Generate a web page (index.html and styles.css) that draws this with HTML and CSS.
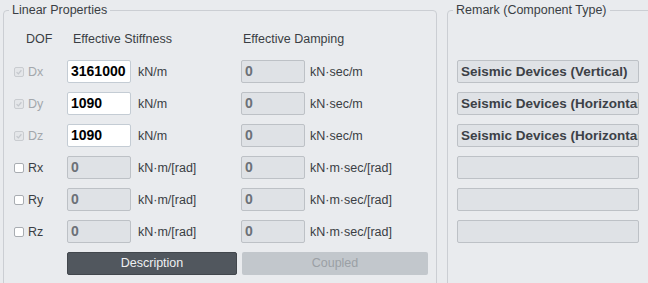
FILE: index.html
```html
<!DOCTYPE html>
<html>
<head>
    <meta charset="utf-8">
    <title>Linear Properties</title>
    <link rel="stylesheet" href="styles.css">
</head>
<body>
<div class="page">
    <fieldset class="group linear">
        <legend>Linear Properties</legend>
        <div class="row head">
            <div class="dof">DOF</div>
            <div class="col_stiff">Effective Stiffness</div>
            <div class="col_damp">Effective Damping</div>
        </div>

        <div class="row">
            <div class="dof off"><span class="chk checked"><svg viewBox="0 0 10 10"><path d="M2 5.2 L4.2 7.3 L8 2.8" fill="none" stroke="#c4c8cd" stroke-width="1.6"/></svg></span>Dx</div>
            <div class="field edit">3161000</div>
            <div class="unit">kN/m</div>
            <div class="field">0</div>
            <div class="unit2">kN·sec/m</div>
        </div>
        <div class="row">
            <div class="dof off"><span class="chk checked"><svg viewBox="0 0 10 10"><path d="M2 5.2 L4.2 7.3 L8 2.8" fill="none" stroke="#c4c8cd" stroke-width="1.6"/></svg></span>Dy</div>
            <div class="field edit">1090</div>
            <div class="unit">kN/m</div>
            <div class="field">0</div>
            <div class="unit2">kN·sec/m</div>
        </div>
        <div class="row">
            <div class="dof off"><span class="chk checked"><svg viewBox="0 0 10 10"><path d="M2 5.2 L4.2 7.3 L8 2.8" fill="none" stroke="#c4c8cd" stroke-width="1.6"/></svg></span>Dz</div>
            <div class="field edit">1090</div>
            <div class="unit">kN/m</div>
            <div class="field">0</div>
            <div class="unit2">kN·sec/m</div>
        </div>
        <div class="row">
            <div class="dof"><span class="chk"></span>Rx</div>
            <div class="field">0</div>
            <div class="unit">kN·m/[rad]</div>
            <div class="field">0</div>
            <div class="unit2">kN·m·sec/[rad]</div>
        </div>
        <div class="row">
            <div class="dof"><span class="chk"></span>Ry</div>
            <div class="field">0</div>
            <div class="unit">kN·m/[rad]</div>
            <div class="field">0</div>
            <div class="unit2">kN·m·sec/[rad]</div>
        </div>
        <div class="row">
            <div class="dof"><span class="chk"></span>Rz</div>
            <div class="field">0</div>
            <div class="unit">kN·m/[rad]</div>
            <div class="field">0</div>
            <div class="unit2">kN·m·sec/[rad]</div>
        </div>

        <div class="buttons">
            <div class="btn dark">Description</div>
            <div class="btn light">Coupled</div>
        </div>
    </fieldset>

    <fieldset class="group remark">
        <legend>Remark (Component Type)</legend>
        <div class="spacer"></div>
        <div class="remark_field">Seismic Devices (Vertical)</div>
        <div class="remark_field">Seismic Devices (Horizontal)</div>
        <div class="remark_field">Seismic Devices (Horizontal)</div>
        <div class="remark_field"></div>
        <div class="remark_field"></div>
        <div class="remark_field"></div>
    </fieldset>
</div>
</body>
</html>
```

FILE: styles.css
```css
body {
    margin: 0;
    background-color: #e9ebee;
    font-family: "Liberation Sans", Arial, sans-serif;
    font-size: 12.5px;
    color: #3a3e44;
    overflow: hidden;
}

.page {
    display: flex;
    align-items: flex-start;
    height: 283px;
    overflow: hidden;
}

.group {
    margin: 2px 0 0 0;
    padding: 0;
    border: 1px solid #cbced3;
    border-radius: 4px;
    height: 290px;
    box-sizing: border-box;
    min-width: 0;
}

.group legend {
    margin-left: 5px;
    padding: 0 3px;
    line-height: 16px;
    color: #3a3e44;
}

.linear {
    margin-left: 3px;
    width: 434px;
    flex: none;
}

.remark {
    margin-left: 10px;
    width: 220px;
    flex: none;
}

.row {
    display: flex;
    align-items: center;
    height: 23px;
    margin-bottom: 9px;
    white-space: nowrap;
}

.row.head {
    height: 42px;
    margin-bottom: 0;
}

.head .dof {
    padding-left: 22px;
}

.col_stiff {
    width: 174px;
    padding-left: 6px;
    box-sizing: border-box;
}

.col_damp {
    padding-left: 2px;
}

.dof {
    width: 63px;
    padding-left: 10px;
    box-sizing: border-box;
    display: flex;
    align-items: center;
}

.dof.off {
    color: #a3a7ac;
}

.chk {
    width: 10px;
    height: 10px;
    border: 1px solid #a9adb2;
    border-radius: 2px;
    background-color: #fff;
    margin-right: 4px;
    display: inline-block;
    box-sizing: border-box;
}

.chk.checked {
    border-color: #c9ccd0;
    background-color: #e4e6e9;
}

.chk svg {
    display: block;
    width: 8px;
    height: 8px;
}

.field {
    width: 64px;
    height: 23px;
    line-height: 21px;
    box-sizing: border-box;
    border: 1px solid #bdc1c6;
    border-radius: 2px;
    background-color: #dfe2e6;
    padding-left: 3px;
    font-size: 14px;
    font-weight: bold;
    color: #6c7178;
    flex: none;
}

.field.edit {
    background-color: #fff;
    border-color: #c4ccd4;
    color: #000;
}

.unit {
    width: 110px;
    padding-left: 7px;
    box-sizing: border-box;
}

.unit2 {
    padding-left: 5px;
}

.buttons {
    display: flex;
    margin: 2px 0 0 63px;
    gap: 5px;
}

.btn {
    height: 23px;
    line-height: 23px;
    box-sizing: border-box;
    border-radius: 2px;
    text-align: center;
}

.btn.dark {
    width: 170px;
    background-color: #51575e;
    border: 1px solid #42474d;
    color: #eef0f2;
    line-height: 21px;
}

.btn.light {
    width: 186px;
    background-color: #c2c7cc;
    color: #9ba0a5;
}

.spacer {
    height: 42px;
}

.remark_field {
    margin-left: 9px;
    width: 182px;
    height: 23px;
    line-height: 21px;
    margin-bottom: 9px;
    box-sizing: border-box;
    border: 1px solid #bdc1c6;
    border-radius: 2px;
    background-color: #dfe2e6;
    padding-left: 3px;
    font-size: 13.5px;
    font-weight: bold;
    color: #3c4147;
    white-space: nowrap;
    overflow: hidden;
}
```
